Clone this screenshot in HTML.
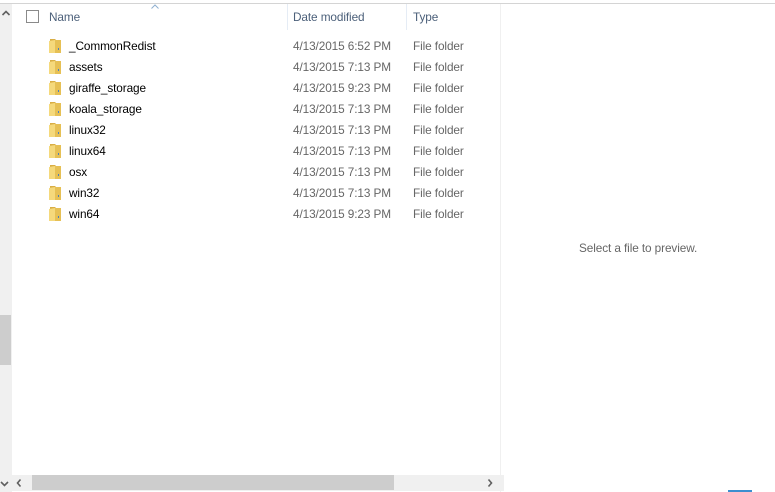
<!DOCTYPE html>
<html><head><meta charset="utf-8"><style>
body{margin:0;width:775px;height:492px;background:#fff;position:relative;overflow:hidden;font-family:"Segoe UI","Liberation Sans",sans-serif;font-size:11.8px;letter-spacing:-0.1px;color:#000}
.a{position:absolute}
.t{position:absolute;white-space:nowrap;line-height:14px}
.hdr{color:#4c607a}
.g{color:#666}
</style></head><body>
<div class="a" style="left:0;top:3px;width:775px;height:1px;background:#d4d4d4"></div>
<div class="a" style="left:0;top:4px;width:12px;height:488px;background:#f0f0f0"></div>
<div class="a" style="left:0;top:315px;width:11px;height:50px;background:#cdcdcd"></div>
<svg class="a" style="left:1px;top:9px" width="10" height="8"><path d="M1.5 6 L5 2.5 L8.5 6" stroke="#606060" stroke-width="1.6" fill="none"/></svg>
<svg class="a" style="left:0px;top:480px" width="10" height="8"><path d="M1 2 L4.5 5.5 L8 2" stroke="#606060" stroke-width="1.6" fill="none"/></svg>
<div class="a" style="left:26px;top:10px;width:11px;height:11px;border:1px solid #8a8a8a;background:#fff"></div>
<div class="t hdr" style="left:49px;top:10px">Name</div>
<svg class="a" style="left:151px;top:4px" width="8" height="5"><path d="M0.5 4.5 L4 1 L7.5 4.5" stroke="#8fb0d0" fill="none"/></svg>
<div class="a" style="left:287px;top:4px;width:1px;height:26px;background:#e5ecf5"></div>
<div class="t hdr" style="left:293px;top:10px">Date modified</div>
<div class="a" style="left:406px;top:4px;width:1px;height:26px;background:#e5ecf5"></div>
<div class="t hdr" style="left:413px;top:10px">Type</div>
<div class="a" style="left:500px;top:4px;width:1px;height:488px;background:#f0f0f0"></div>
<div class="t g" style="left:579px;top:241px">Select a file to preview.</div>
<div id="rows"></div>
<div class="a" style="left:10px;top:475px;width:494px;height:16px;background:#f0f0f0"></div>
<div class="a" style="left:32px;top:475px;width:362px;height:15px;background:#cdcdcd"></div>
<svg class="a" style="left:15px;top:478px" width="8" height="10"><path d="M5.5 1.5 L2.5 5 L5.5 8.5" stroke="#606060" stroke-width="1.6" fill="none"/></svg>
<svg class="a" style="left:486px;top:478px" width="8" height="10"><path d="M2.5 1.5 L5.5 5 L2.5 8.5" stroke="#606060" stroke-width="1.6" fill="none"/></svg>
<div class="a" style="left:728px;top:490px;width:24px;height:2px;background:#3c8fd0"></div>
<script>
var r=[["_CommonRedist","4/13/2015 6:52 PM"],["assets","4/13/2015 7:13 PM"],["giraffe_storage","4/13/2015 9:23 PM"],["koala_storage","4/13/2015 7:13 PM"],["linux32","4/13/2015 7:13 PM"],["linux64","4/13/2015 7:13 PM"],["osx","4/13/2015 7:13 PM"],["win32","4/13/2015 7:13 PM"],["win64","4/13/2015 9:23 PM"]];
var h="";
r.forEach(function(e,i){var y=39+i*21;
h+='<svg class="a" style="left:48px;top:'+(y-1)+'px" width="15" height="16"><path d="M2 1 h5 l1 1 h5 v13 h-11z" fill="#d9ae45"/><path d="M1 3 l6 -1 v13 h-6z" fill="#f5d97c"/><path d="M7 2 h6 v13 h-6z" fill="#e6c055"/><rect x="10" y="10" width="1" height="2" fill="#4a7fc0"/></svg>';
h+='<div class="t" style="left:69px;top:'+y+'px">'+e[0]+'</div>';
h+='<div class="t g" style="left:293px;top:'+y+'px">'+e[1]+'</div>';
h+='<div class="t g" style="left:413px;top:'+y+'px">File folder</div>';});
document.getElementById("rows").innerHTML=h;
</script>
</body></html>
